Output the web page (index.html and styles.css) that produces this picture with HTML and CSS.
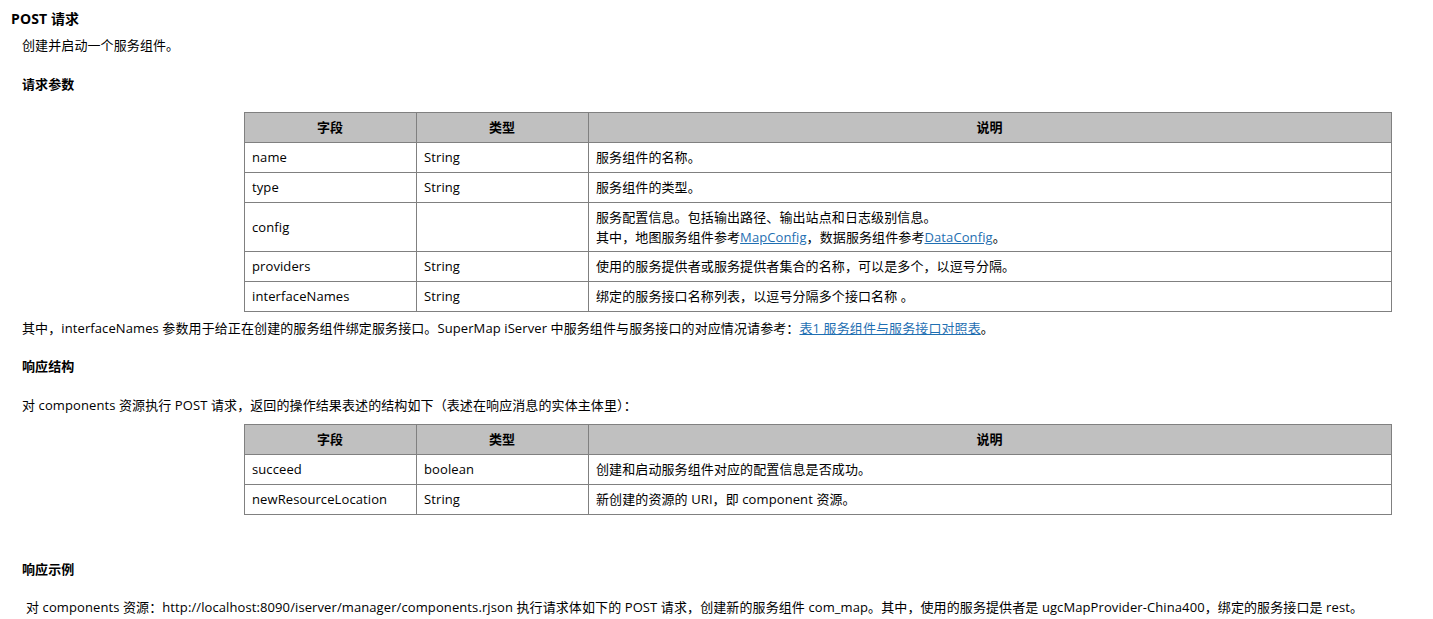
FILE: index.html
```html
<!DOCTYPE html>
<html lang="zh-CN">
<head>
<meta charset="utf-8">
<title>POST 请求</title>
<link rel="stylesheet" href="styles.css">
</head>
<body>
<div class="page">
  <h3 class="title">POST 请求</h3>
  <p class="desc">创建并启动一个服务组件。</p>
  <h4 class="sub">请求参数</h4>
  <table class="params">
    <colgroup><col class="c1"><col class="c2"><col class="c3"></colgroup>
    <thead>
      <tr><th>字段</th><th>类型</th><th>说明</th></tr>
    </thead>
    <tbody>
      <tr><td>name</td><td>String</td><td>服务组件的名称。</td></tr>
      <tr><td>type</td><td>String</td><td>服务组件的类型。</td></tr>
      <tr class="tall"><td>config</td><td></td><td>服务配置信息。包括输出路径、输出站点和日志级别信息。<br>其中，地图服务组件参考<a href="#">MapConfig</a>，数据服务组件参考<a href="#">DataConfig</a>。</td></tr>
      <tr><td>providers</td><td>String</td><td>使用的服务提供者或服务提供者集合的名称，可以是多个，以逗号分隔。</td></tr>
      <tr><td>interfaceNames</td><td>String</td><td>绑定的服务接口名称列表，以逗号分隔多个接口名称 。</td></tr>
    </tbody>
  </table>
  <p class="note">其中，interfaceNames 参数用于给正在创建的服务组件绑定服务接口。SuperMap iServer 中服务组件与服务接口的对应情况请参考：<a href="#">表1 服务组件与服务接口对照表</a>。</p>
  <h4 class="sub sub2">响应结构</h4>
  <p class="note note2">对 components 资源执行 POST 请求，返回的操作结果表述的结构如下（表述在响应消息的实体主体里）：</p>
  <table class="params result">
    <colgroup><col class="c1"><col class="c2"><col class="c3"></colgroup>
    <thead>
      <tr><th>字段</th><th>类型</th><th>说明</th></tr>
    </thead>
    <tbody>
      <tr><td>succeed</td><td>boolean</td><td>创建和启动服务组件对应的配置信息是否成功。</td></tr>
      <tr><td>newResourceLocation</td><td>String</td><td>新创建的资源的 URI，即 component 资源。</td></tr>
    </tbody>
  </table>
  <h4 class="sub sub3">响应示例</h4>
  <p class="example">对 components 资源：http://localhost:8090/iserver/manager/components.rjson 执行请求体如下的 POST 请求，创建新的服务组件 com_map。其中，使用的服务提供者是 ugcMapProvider-China400，绑定的服务接口是 rest。</p>
</div>
</body>
</html>
```

FILE: styles.css
```css
html, body {
  margin: 0;
  padding: 0;
  background: #ffffff;
}

body {
  font-family: "Open Sans", "Noto Sans CJK SC", sans-serif;
  font-size: 13px;
  letter-spacing: 0.1px;
  color: #000000;
}

.page {
  padding: 9px 0 0 11px;
}

.title {
  margin: 0;
  font-size: 14px;
  font-weight: bold;
  line-height: 20px;
}

.desc {
  margin: 6px 0 0 11px;
  line-height: 20px;
}

.sub {
  margin: 19px 0 0 11px;
  font-size: 13px;
  font-weight: bold;
  line-height: 20px;
}

.params {
  border-collapse: collapse;
  margin: 18px 0 0 233px;
  width: 1148px;
  table-layout: fixed;
}

.params .c1,
.params .c2 {
  width: 172px;
}

.params th,
.params td {
  border: 1px solid #808080;
  line-height: 20px;
  padding: 4px 8px 5px 7px;
  text-align: left;
  vertical-align: middle;
}

.params .tall td {
  padding-bottom: 4px;
}

.params th {
  background: #c0c0c0;
  font-weight: bold;
  text-align: center;
}

a {
  color: #1f6fb2;
  text-decoration: underline;
}

.note {
  margin: 6px 0 0 11px;
  line-height: 20px;
}

.sub2 {
  margin-top: 18px;
}

.note2 {
  margin-top: 19px;
}

.result {
  margin-top: 9px;
}

.sub3 {
  margin-top: 44px;
}

.example {
  margin: 18px 0 0 15px;
  line-height: 20px;
  white-space: nowrap;
}
```
